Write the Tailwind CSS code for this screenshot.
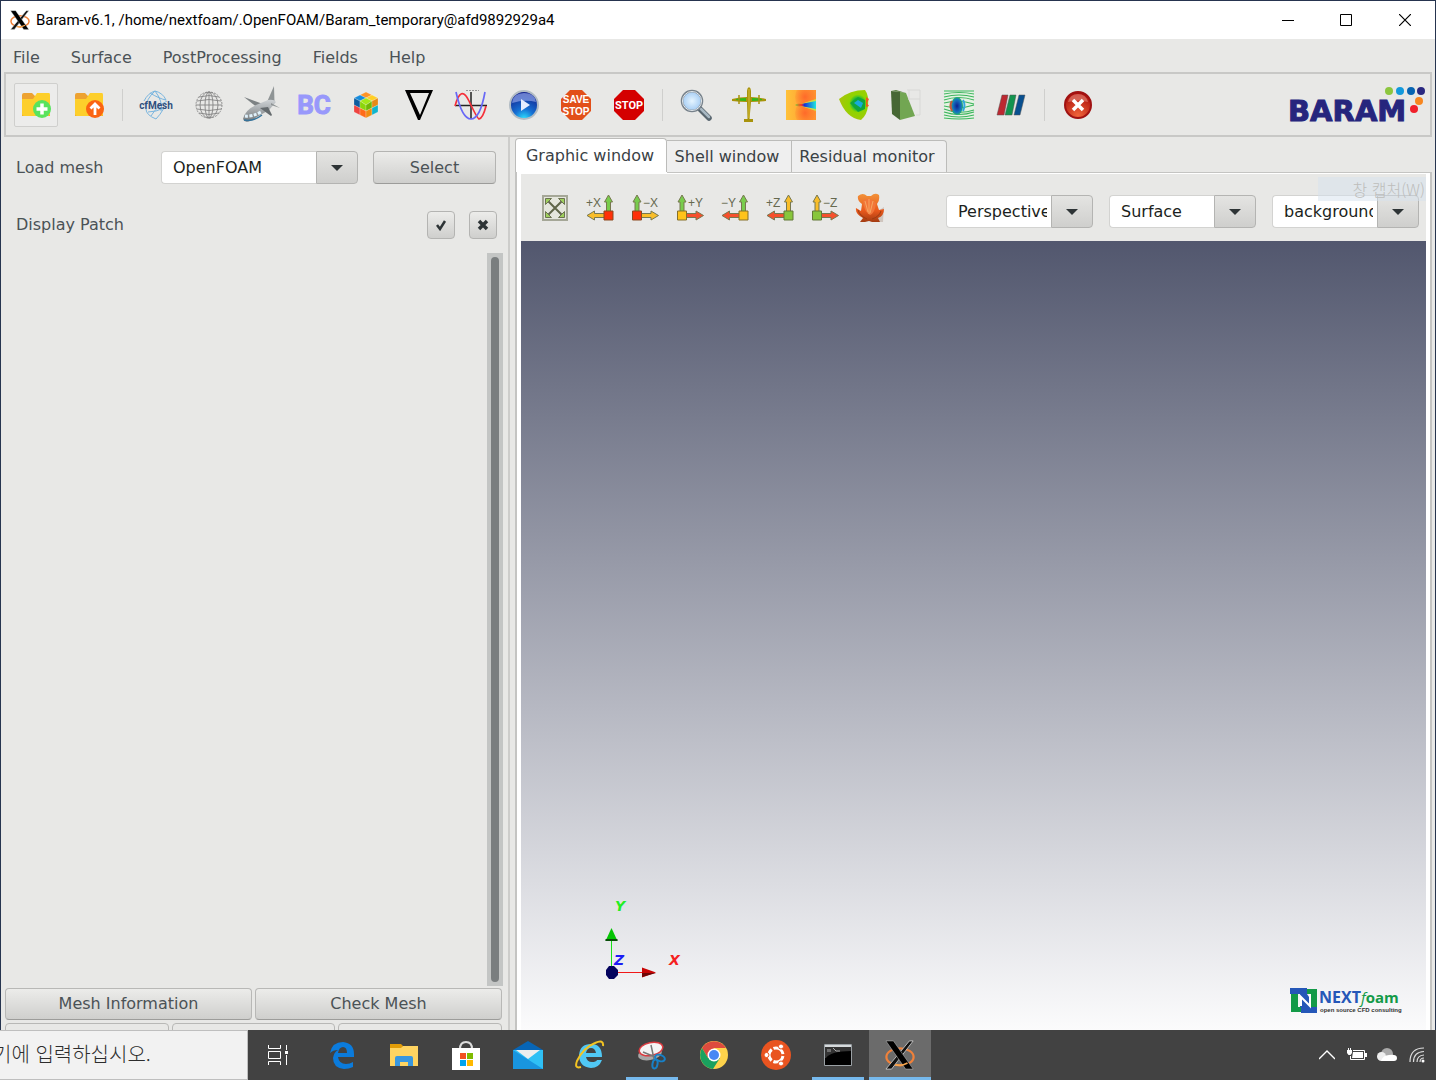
<!DOCTYPE html>
<html lang="en">
<head>
  <meta charset="UTF-8">
  <meta name="viewport" content="width=device-width, initial-scale=1.0">
  <title>Baram-v6.1</title>
  <script src="https://cdn.jsdelivr.net/npm/@tailwindcss/browser@4"></script>
</head>
<body class="h-screen flex flex-col overflow-hidden bg-[#e8e8e6] font-['DejaVu_Sans',sans-serif] text-base text-[#4b5256]">

  <!-- Shared shapes -->
  <svg class="absolute w-0 h-0" aria-hidden="true">
    <defs>
      <symbol id="arrow-up" viewBox="0 0 30 30"><path d="M7 2 11 9H9V19H5V9H3Z" fill="currentColor" stroke="#77784f"/></symbol>
      <symbol id="arrow-right" viewBox="0 0 30 30"><path d="M28.500 22.500 21 27V24.500H11V20.500H21V18Z" fill="currentColor" stroke="#77784f"/></symbol>
      <symbol id="folder" viewBox="0 0 32 32">
        <path d="M2 6q0-2 2-2h8l3 3h14q1 0 1 1v19H2Z" fill="#eda231"/>
        <path d="M2 10h11l4-6h12q1 0 1 2v19q0 2-2 2H4q-2 0-2-2Z" fill="#fdcf2b"/>
      </symbol>
      <symbol id="xlogo" viewBox="0 0 32 32">
        <ellipse cx="16" cy="18" rx="14.500" ry="9" fill="none" stroke="#f0813a" stroke-width="2.400"/>
        <path d="M26 1h4L7 31H1Z" fill="#111" stroke="#ddd" stroke-width=".8"/>
        <path d="M1 1h8l21 30h-8Z" fill="#000" stroke="#ccc" stroke-width=".5"/>
        <path d="M11 26.500q7 1.500 13-2" fill="none" stroke="#f5a54e" stroke-width="1.800"/>
      </symbol>
      <linearGradient id="steel" x1="0" y1="0" x2="0" y2="1"><stop offset="0" stop-color="#cfd3d6"/><stop offset="1" stop-color="#74797c"/></linearGradient>
      <radialGradient id="orb" cx=".5" cy="1" r=".9"><stop offset="0" stop-color="#2fe4ff"/><stop offset=".4" stop-color="#1671d4"/><stop offset="1" stop-color="#12248f"/></radialGradient>
      <radialGradient id="lens"><stop offset="0" stop-color="#e6f5ff"/><stop offset="1" stop-color="#a3cbf3"/></radialGradient>
      <radialGradient id="redball" cx=".5" cy=".9" r=".9"><stop offset="0" stop-color="#f0653a"/><stop offset="1" stop-color="#a90a0a"/></radialGradient>
      <radialGradient id="plume" cx=".5" cy=".5" r=".6"><stop offset="0" stop-color="#ff6a2a"/><stop offset="1" stop-color="#ff6a2a" stop-opacity="0"/></radialGradient>
      <linearGradient id="jet"><stop offset="0" stop-color="#8ed03a"/><stop offset=".3" stop-color="#ff3a20"/><stop offset=".45" stop-color="#1530d8"/><stop offset="1" stop-color="#20e8e0"/></linearGradient>
      <linearGradient id="heat" x1="0" x2="1"><stop offset="0" stop-color="#ffc23a"/><stop offset="1" stop-color="#ff9030"/></linearGradient>
      <radialGradient id="shell" cx=".65" cy=".45" r=".6"><stop offset="0" stop-color="#26b9d8"/><stop offset=".3" stop-color="#18b83a"/><stop offset=".5" stop-color="#8fd400"/><stop offset="1" stop-color="#a6c60a"/></radialGradient>
      <radialGradient id="core" cx=".5" cy=".5" r=".5"><stop offset="0" stop-color="#101f90"/><stop offset=".7" stop-color="#1575c0"/><stop offset="1" stop-color="#22b070"/></radialGradient>
      <linearGradient id="tulip" x1="0" y1="0" x2="0" y2="1"><stop offset="0" stop-color="#f29238"/><stop offset=".6" stop-color="#e8581c"/><stop offset="1" stop-color="#a33c12"/></linearGradient>
    </defs>
  </svg>

  <div class="flex-1 min-h-0 flex flex-col border-t border-x border-[#26344f]">

    <!-- Title bar -->
    <header class="h-[38px] shrink-0 flex items-center bg-white text-black">
      <svg class="w-5 h-5 ml-[9px] mr-[6px]"><use href="#xlogo"/></svg>
      <h1 class="text-[15px] leading-5 font-[Roboto,sans-serif] whitespace-nowrap">Baram-v6.1, /home/nextfoam/.OpenFOAM/Baram_temporary@afd9892929a4</h1>
      <div class="ml-auto flex">
        <button aria-label="Minimize" class="w-[58px] h-9 grid place-items-center"><svg class="w-3 h-3" viewBox="0 0 12 12"><path d="M0 6.500h12" stroke="#000"/></svg></button>
        <button aria-label="Maximize" class="w-[58px] h-9 grid place-items-center"><svg class="w-3 h-3" viewBox="0 0 12 12"><path d="M.5.5h11v11H.5Z" fill="none" stroke="#000"/></svg></button>
        <button aria-label="Close" class="w-[60px] h-9 grid place-items-center"><svg class="w-3 h-3" viewBox="0 0 12 12"><path d="M0 0 12 12M12 0 0 12" stroke="#000" stroke-width="1.200"/></svg></button>
      </div>
    </header>

    <!-- Menu -->
    <nav class="h-[33px] shrink-0 flex items-center gap-[31px] pt-1 pl-3 leading-5">
      <a href="#">File</a>
      <a href="#">Surface</a>
      <a href="#">PostProcessing</a>
      <a href="#">Fields</a>
      <a href="#">Help</a>
    </nav>

    <!-- Main toolbar -->
    <div class="h-[65px] shrink-0 mx-[3px] pl-2 pr-[5px] flex items-center gap-[11px] border-2 border-[#c8c8c6]">
      <div class="flex w-[97px] justify-between">
        <button aria-label="New" class="w-11 h-11 grid place-items-center rounded-xs border border-[#cfcfcd] bg-[#ececeb]">
          <svg class="w-8 h-8" viewBox="0 0 32 32"><use href="#folder"/><circle cx="22" cy="20" r="9" fill="#59e35d"/><path d="M22 14.500v11M16.500 20h11" stroke="#fff" stroke-width="3.500"/></svg>
        </button>
        <button aria-label="Open" class="w-11 h-11 grid place-items-center">
          <svg class="w-8 h-8" viewBox="0 0 32 32"><use href="#folder"/><circle cx="22" cy="20" r="9" fill="#fb6412"/><path d="M22 26V16M17.500 19.500 22 15l4.500 4.500" fill="none" stroke="#fff" stroke-width="2.800"/></svg>
        </button>
      </div>
      <div class="w-px h-8 bg-[#cfcfcd]"></div>
      <div class="flex w-[517px] justify-between">
        <button aria-label="cfMesh" class="w-11 h-11 grid place-items-center">
          <svg class="w-9 h-8" viewBox="0 0 36 32"><g fill="none" stroke="#79b5df"><path d="M6 12q4-8 11-10 8 2 11 9M12 4q10 6 16 7M17 2q-9 8-9 17M17 2q8 10 6 20M8 20q0 6 10 10 4-4 8-11M10 23q8 0 16-4M13 27q6-10 16-15"/></g><text x="18" y="20" text-anchor="middle" font-family="Roboto" font-size="10" font-weight="bold" fill="#30507e">cfMesh</text></svg>
        </button>
        <button aria-label="Mesh" class="w-11 h-11 grid place-items-center">
          <svg class="w-8 h-8" viewBox="0 0 32 32"><g fill="none" stroke="#838383" stroke-width=".9"><circle cx="16" cy="16" r="13" stroke-dasharray="2 1"/><ellipse cx="16" cy="16" rx="9" ry="13"/><ellipse cx="16" cy="16" rx="4" ry="13"/><path d="M16 3v26M3 16h26M4 12q12-3 24 0M6 8q10-3 20 0M4 20q12 3 24 0M6 24q10 3 20 0"/></g></svg>
        </button>
        <button aria-label="Airplane" class="w-11 h-11 grid place-items-center">
          <svg class="w-10 h-10" viewBox="0 0 40 40"><path d="M26 17 33 1l.5 17Z" fill="#8f9495"/><path d="M3 12 22 19l-5 4Z" fill="#7d8284"/><path d="M2 34Q4 25 15 20L27 15q6-1 8 2L28 25 11 35q-7 4-9-1Z" fill="url(#steel)"/><path d="M4 31q7 1 16-4" fill="none" stroke="#dff1fb" stroke-width="3" stroke-dasharray="3 1.500"/><path d="M3 35q9 2 18-5" fill="none" stroke="#35739b" stroke-width="1.500"/><path d="M19 23 30 31l1-1-4-8Z" fill="#656b6e"/><path d="M30 20 39 23l-9-5Z" fill="#8f9495"/></svg>
        </button>
        <button aria-label="Boundary conditions" class="w-11 h-11 grid place-items-center">
          <svg class="w-9 h-8" viewBox="0 0 36 32"><text x="18" y="25" text-anchor="middle" font-family="Roboto" font-size="26" font-weight="bold" fill="#9898fb" stroke="#9898fb">BC</text></svg>
        </button>
        <button aria-label="Materials" class="w-11 h-11 grid place-items-center">
          <svg class="w-8 h-8" viewBox="0 0 32 32"><g stroke="#fff8" stroke-width=".4"><path d="m16 3 6 3-6 3-6-3Z" fill="#ff9326"/><path d="m10 6 6 3-6 3-6-3Z" fill="#168bdc"/><path d="m22 6 6 3-6 3-6-3Z" fill="#ffcf26"/><path d="m16 9 6 3-6 4-6-4Z" fill="#a5e818"/><path d="m4 9 6 3v7l-6-3Z" fill="#0e5d9f"/><path d="m10 12 6 4v6l-6-3Z" fill="#8bd50a"/><path d="m22 12-6 4v6l6-3Z" fill="#72b805"/><path d="m28 9-6 3v7l6-3Z" fill="#e78918"/><path d="m4 16 6 3v7l-6-3Z" fill="#ee4440"/><path d="m10 19 6 3v7l-6-3Z" fill="#ff6b19"/><path d="m22 19-6 3v7l6-3Z" fill="#ef8c10"/><path d="m28 16-6 3v7l6-3Z" fill="#10b5cd"/></g></svg>
        </button>
        <button aria-label="Gradient" class="w-11 h-11 grid place-items-center">
          <svg class="w-8 h-8" viewBox="0 0 32 32"><path fill-rule="evenodd" d="M2 1h28L17 31h-2ZM7 4l10 22 9-22Z" fill="#000"/></svg>
        </button>
        <button aria-label="Functions" class="w-11 h-11 grid place-items-center">
          <svg class="w-9 h-9" viewBox="0 0 36 36" fill="none"><path d="M2 18.500h32M18 5v27" stroke="#222" stroke-width="1.500"/><path d="M13 3.500h13" stroke="#999" stroke-dasharray="2 1"/><path d="M2 19Q8-3 16 14T26 32q4-1 7-13" stroke="#f5303a" stroke-width="1.700"/><path d="M3 5q6 27 15 27T32 5" stroke="#6868f6" stroke-width="1.700"/></svg>
        </button>
        <button aria-label="Run" class="w-11 h-11 grid place-items-center">
          <svg class="w-8 h-8" viewBox="0 0 32 32"><circle cx="16" cy="16" r="14" fill="url(#orb)" stroke="#b2bcc4" stroke-width="2"/><path d="M4 14Q5 4 16 4t12 9q-11-3-24 1Z" fill="#8fa4e8" opacity=".7"/><path d="m13 10 9 6-9 6Z" fill="#e6edff"/></svg>
        </button>
        <button aria-label="Save and stop" class="w-11 h-11 grid place-items-center">
          <svg class="w-9 h-8" viewBox="0 0 36 32"><path d="M12 1h12l9 9v12l-9 9H12l-9-9V10Z" fill="#e24f19"/><g font-family="Liberation Sans" font-size="10" font-weight="bold" fill="#fff" text-anchor="middle"><text x="18" y="14">SAVE</text><text x="18" y="26">STOP</text></g></svg>
        </button>
        <button aria-label="Stop" class="w-11 h-11 grid place-items-center">
          <svg class="w-8 h-8" viewBox="0 0 32 32"><path d="M10 1h12l9 9v12l-9 9H10l-9-9V10Z" fill="#d40000"/><text x="16" y="20" font-family="Roboto" font-size="11" font-weight="bold" fill="#fff" text-anchor="middle">STOP</text></svg>
        </button>
      </div>
      <div class="w-px h-8 bg-[#cfcfcd]"></div>
      <div class="flex w-[359px] justify-between">
        <button aria-label="Search" class="w-11 h-11 grid place-items-center">
          <svg class="w-8 h-8" viewBox="0 0 32 32"><path d="m20 20 9 9" stroke="#59666f" stroke-width="5.500" stroke-linecap="round"/><path d="m21 20 8 8" stroke="#a9b9c3" stroke-width="2.500" stroke-linecap="round"/><circle cx="12" cy="12" r="10" fill="url(#lens)" stroke="#77828b" stroke-width="2.500"/><circle cx="12" cy="12" r="9.500" fill="none" stroke="#e4e9ed"/></svg>
        </button>
        <button aria-label="Surface result" class="w-11 h-11 grid place-items-center">
          <svg class="w-9 h-9" viewBox="0 0 36 36"><path d="M1 12q8-2 15-2V4q0-3 2-4 2 1 2 4v6q7 0 15 2v2q-8 1-15 1l-1.500 17h3.500v3h-9v-3h3.500L16 15q-7 0-15-1Z" fill="#a8930c"/><path d="M5 12q5-1 10-1v3q-6 0-10-1M31 12q-5-1-10-1v3q6 0 10-1" fill="#34b71a"/><path d="M8 8v9M28 8v9" stroke="#a8930c" stroke-width="1.500"/><path d="M18 2v29" stroke="#d6bd37"/></svg>
        </button>
        <button aria-label="Cut plane" class="w-11 h-11 grid place-items-center">
          <svg class="w-[30px] h-[30px]" viewBox="0 0 30 30"><path d="M0 0h30v30H0Z" fill="url(#heat)"/><ellipse cx="19" cy="7" rx="10" ry="12" fill="url(#plume)"/><ellipse cx="19" cy="23" rx="10" ry="12" fill="url(#plume)"/><path d="M12 15 30 9v12Z" fill="#cde044"/><path d="M9 15q2-2 6-1l15-3v8l-15-3q-4 1-6-1Z" fill="url(#jet)"/></svg>
        </button>
        <button aria-label="Iso surface" class="w-11 h-11 grid place-items-center">
          <svg class="w-8 h-8" viewBox="0 0 32 32"><path d="M1 10Q12 1 27 1q4 5 3 16-1 9-7 14Q8 29 1 10Z" fill="url(#shell)"/><path d="m12 14 8-6 7 3v9l-7 3Z" fill="#11a53d"/><path d="m16 14 4-3 5 3-2 5Z" fill="#18a9dd"/><path d="m28 8 3 2-2 4 2 3-3 1Z" fill="#f05b20"/></svg>
        </button>
        <button aria-label="Clip" class="w-11 h-11 grid place-items-center">
          <svg class="w-8 h-8" viewBox="0 0 32 32"><path d="m1 2 9 1v28L2 25Z" fill="#466734"/><path d="m10 3 6 1 9 23-15 4Z" fill="#72a652"/><path d="m1 2 5-1 10 3-6-1Z" fill="#587f40"/><path d="M17 1h13v25h-4M19 1v10M19 10h11" fill="none" stroke="#d8d8d6"/></svg>
        </button>
        <button aria-label="Streamlines" class="w-11 h-11 grid place-items-center">
          <svg class="w-8 h-8" viewBox="0 0 32 32"><path d="M1 1h30v30H1Z" fill="#e4f2e2"/><g fill="none" stroke="#3bb45c" stroke-width="1.100"><path d="M1 2h30M1 5q15-3 30 0M1 8q15-4 30 0M1 11q15-5 30 0M1 14q15-4 30 1M1 17q15 4 30-1M1 20q15 6 30 1M1 23q15 5 30 0M1 26q15 4 30 0M1 29q15 2 30 0"/></g><ellipse cx="14" cy="17" rx="6" ry="9" fill="url(#core)"/><path d="M9 12q-3 4 0 10" stroke="#c5583a" stroke-width="2" fill="none"/><path d="M20 11q3 5 0 11" stroke="#2fa8dd" stroke-width="2" fill="none"/></svg>
        </button>
        <button aria-label="ParaView" class="w-11 h-11 grid place-items-center">
          <svg class="w-8 h-8" viewBox="0 0 32 32" stroke="#555" stroke-width=".5"><path d="M7 6h6L9 26H2Z" fill="#bc2831"/><path d="M15 6h6l-4 20h-7Z" fill="#12934e"/><path d="M24 6h6l-5 20h-6Z" fill="#084f8f"/></svg>
        </button>
      </div>
      <div class="w-px h-8 bg-[#cfcfcd]"></div>
      <button aria-label="Quit" class="w-11 h-11 grid place-items-center">
        <svg class="w-8 h-8" viewBox="0 0 32 32"><circle cx="16" cy="16" r="13" fill="url(#redball)" stroke="#a01212" stroke-width="2"/><path d="M6 13Q8 5 16 5t10 8q-9-3-20 0Z" fill="#f0a090" opacity=".5"/><path d="m11 11 10 10M21 11 11 21" stroke="#fff" stroke-width="3.500"/></svg>
      </button>
      <svg class="ml-auto w-[137px] h-9" viewBox="0 0 137 36">
        <text x="0" y="34" font-family="DejaVu Sans" font-size="29" font-weight="bold" fill="#26257d" stroke="#26257d">BARAM</text>
        <circle cx="101" cy="4" r="4" fill="#8cc63f"/><circle cx="112" cy="4" r="4" fill="#1299dc"/><circle cx="123" cy="4" r="4" fill="#0764b2"/><circle cx="133" cy="4" r="4" fill="#2a2880"/>
        <circle cx="131" cy="14" r="4" fill="#f7861f"/><circle cx="126" cy="22" r="4" fill="#f0202a"/>
      </svg>
    </div>

    <div class="flex-1 min-h-0 flex">

      <!-- Left panel -->
      <section class="w-[509px] shrink-0 flex flex-col border-r-2 border-[#cdcdcb]">
        <div class="flex items-center pt-[14px] pl-[15px] pr-[11px]">
          <label for="mesh-format" class="w-[145px]">Load mesh</label>
          <div class="flex h-[33px] w-[197px]">
            <select id="mesh-format" class="appearance-none flex-1 min-w-0 pl-[11px] bg-white text-[#1c1f20] rounded-l border border-r-0 border-[#d3d3d1]"><option>OpenFOAM</option></select>
            <span class="w-[42px] grid place-items-center rounded-r border border-[#b4b4b2] bg-linear-to-b from-[#e4e4e2] to-[#cfcfcd]"><svg class="w-3 h-2" viewBox="0 0 12 8"><path d="M0 1h12L6 7Z" fill="#2e3436"/></svg></span>
          </div>
          <button class="ml-[15px] h-[33px] w-[123px] rounded border border-[#b4b4b2] border-b-[#9c9c9a] bg-linear-to-b from-[#ececea] to-[#cfcfcd]">Select</button>
        </div>
        <div class="flex items-center pt-[27px] pl-[15px] pr-[11px]">
          <span class="mr-auto">Display Patch</span>
          <button aria-label="Select all" class="w-7 h-7 mr-[14px] grid place-items-center rounded border border-[#b4b4b2] bg-linear-to-b from-[#ececea] to-[#cfcfcd]"><svg class="w-3 h-3" viewBox="0 0 12 12"><path d="m2 6 3 4 5-8" fill="none" stroke="#2e3436" stroke-width="2.500"/></svg></button>
          <button aria-label="Deselect all" class="w-7 h-7 grid place-items-center rounded border border-[#b4b4b2] bg-linear-to-b from-[#ececea] to-[#cfcfcd]"><svg class="w-3 h-3" viewBox="0 0 12 12"><path d="m2 2 8 8M10 2 2 10" stroke="#2e3436" stroke-width="3.500"/></svg></button>
        </div>
        <div class="flex-1 min-h-0 mt-[14px] mr-[5px] flex justify-end">
          <div class="w-4 flex justify-center py-1 bg-[#c3c5c4]"><div class="w-2 rounded-full bg-[#7a7e7f]"></div></div>
        </div>
        <div class="flex gap-[3px] pt-0.5 pl-1 pr-[6px]">
          <button class="flex-1 h-8 rounded border border-[#b8b8b6] border-b-[#9c9c9a] bg-linear-to-b from-[#ececea] to-[#cfcfcd]">Mesh Information</button>
          <button class="flex-1 h-8 rounded border border-[#b8b8b6] border-b-[#9c9c9a] bg-linear-to-b from-[#ececea] to-[#cfcfcd]">Check Mesh</button>
        </div>
        <div class="h-[10px] overflow-hidden flex gap-[3px] pt-[3px] pl-1 pr-[6px]">
          <button aria-label="Action 1" class="flex-1 h-8 rounded border border-[#b8b8b6] bg-[#e8e8e6]"></button>
          <button aria-label="Action 2" class="flex-1 h-8 rounded border border-[#b8b8b6] bg-[#e8e8e6]"></button>
          <button aria-label="Action 3" class="flex-1 h-8 rounded border border-[#b8b8b6] bg-[#e8e8e6]"></button>
        </div>
      </section>

      <!-- Notebook -->
      <section class="flex-1 min-w-0 flex flex-col ml-[5px] mr-[3px]">
        <div class="relative flex items-end h-[35px] shrink-0 text-[#3a4145]">
          <button class="relative z-10 h-[34px] w-[152px] pr-0.5 rounded-t border border-b-0 border-[#bcbcba] bg-white">Graphic window</button>
          <button class="h-8 w-[125px] pr-1 bg-[#efefef] border-t border-r border-[#bcbcba]">Shell window</button>
          <button class="h-8 w-[155px] pr-1 bg-[#efefef] border-t border-r rounded-tr border-[#bcbcba]">Residual monitor</button>
        </div>
        <div class="relative flex-1 min-h-0 flex flex-col bg-white border-x-2 border-[#c4c4c2] px-1">
          <div class="-mx-1 h-0.5 shrink-0 flex"><span class="w-[150px]"></span><span class="flex-1 h-px bg-[#c4c4c2]"></span></div>
          <div class="h-[67px] shrink-0 flex items-center bg-[#e8e8e6] pl-[11px] pr-[7px]">
            <button aria-label="Fit" class="w-[45px] grid place-items-center">
              <svg class="w-7 h-7" viewBox="0 0 28 28"><path d="M2 2h24v24H2Z" fill="#e5e6dd" stroke="#a5a797" stroke-width="2"/><path d="m5 5 18 18M23 5 5 23" stroke="#5f6549" stroke-width="2"/><path d="M4.500 4.500h6l-6 6ZM23.500 4.500h-6l6 6ZM4.500 23.500h6l-6-6ZM23.500 23.500h-6l6-6Z" fill="#9fd05e" stroke="#6b7251"/></svg>
            </button>
            <button aria-label="+X" class="w-[45px] grid place-items-center">
              <svg class="w-[30px] h-[30px]" viewBox="0 0 30 30"><g transform="matrix(-1 0 0 1 30.500 0)"><use href="#arrow-up" class="text-[#78cc4d]"/><use href="#arrow-right" class="text-[#f8bd29]"/></g><path d="M19 18h9v9h-9Z" fill="#ff3008" stroke="#8b4a20"/><text x="1" y="14" font-family="Liberation Sans" font-size="12" fill="#66694f">+X</text></svg>
            </button>
            <button aria-label="-X" class="w-[45px] grid place-items-center">
              <svg class="w-[30px] h-[30px]" viewBox="0 0 30 30"><use href="#arrow-up" class="text-[#78cc4d]"/><use href="#arrow-right" class="text-[#f8bd29]"/><path d="M2.500 18h9v9h-9Z" fill="#ff3008" stroke="#8b4a20"/><text x="13" y="14" font-family="Liberation Sans" font-size="12" fill="#66694f">−X</text></svg>
            </button>
            <button aria-label="+Y" class="w-[45px] grid place-items-center">
              <svg class="w-[30px] h-[30px]" viewBox="0 0 30 30"><use href="#arrow-up" class="text-[#78cc4d]"/><use href="#arrow-right" class="text-[#f5502c]"/><path d="M2.500 18h9v9h-9Z" fill="#ffc31a" stroke="#85702a"/><text x="13" y="14" font-family="Liberation Sans" font-size="12" fill="#66694f">+Y</text></svg>
            </button>
            <button aria-label="-Y" class="w-[45px] grid place-items-center">
              <svg class="w-[30px] h-[30px]" viewBox="0 0 30 30"><g transform="matrix(-1 0 0 1 30.500 0)"><use href="#arrow-up" class="text-[#78cc4d]"/><use href="#arrow-right" class="text-[#f5502c]"/></g><path d="M19 18h9v9h-9Z" fill="#ffc31a" stroke="#85702a"/><text x="1" y="14" font-family="Liberation Sans" font-size="12" fill="#66694f">−Y</text></svg>
            </button>
            <button aria-label="+Z" class="w-[45px] grid place-items-center">
              <svg class="w-[30px] h-[30px]" viewBox="0 0 30 30"><g transform="matrix(-1 0 0 1 30.500 0)"><use href="#arrow-up" class="text-[#f8bd29]"/><use href="#arrow-right" class="text-[#f5502c]"/></g><path d="M19 18h9v9h-9Z" fill="#88c63c" stroke="#637838"/><text x="1" y="14" font-family="Liberation Sans" font-size="12" fill="#66694f">+Z</text></svg>
            </button>
            <button aria-label="-Z" class="w-[45px] grid place-items-center">
              <svg class="w-[30px] h-[30px]" viewBox="0 0 30 30"><use href="#arrow-up" class="text-[#f8bd29]"/><use href="#arrow-right" class="text-[#f5502c]"/><path d="M2.500 18h9v9h-9Z" fill="#88c63c" stroke="#637838"/><text x="13" y="14" font-family="Liberation Sans" font-size="12" fill="#66694f">−Z</text></svg>
            </button>
            <button aria-label="Background picture" class="w-[45px] grid place-items-center">
              <svg class="w-[30px] h-[30px]" viewBox="0 0 30 30"><path d="M20 20 29 14l-1 15h-9Z" fill="#cfc5be"/><path d="M3 3Q8-1 12 3h4q4-4 8-1 1 6-2 9l2 6 5-1q0 7-6 9l2 4h-8l-3-1-4 1H5l3-4Q0 21 1 15l5 3 1-7Q2 8 3 3Z" fill="url(#tulip)"/><path d="M8 8q6-5 13 2-1 10-6 12-6-3-7-14Z" fill="#f2763a"/><path d="M14 6v15M10 8l3 11M18 8l-3 12" stroke="#f8b26b" stroke-width=".8"/><path d="M3 17q2 6 9 9M26 18q-2 6-9 8" fill="none" stroke="#9d3b12"/></svg>
            </button>
            <div class="ml-auto flex gap-4 pt-2">
              <div class="flex h-[33px] w-[147px]">
                <select aria-label="Projection" class="appearance-none flex-1 min-w-0 pl-[11px] pr-1 bg-white text-[#1c1f20] rounded-l border border-r-0 border-[#d3d3d1]"><option>Perspective</option></select>
                <span class="w-[42px] grid place-items-center rounded-r border border-[#b4b4b2] bg-linear-to-b from-[#e4e4e2] to-[#cfcfcd]"><svg class="w-3 h-2" viewBox="0 0 12 8"><path d="M0 1h12L6 7Z" fill="#2e3436"/></svg></span>
              </div>
              <div class="flex h-[33px] w-[147px]">
                <select aria-label="Representation" class="appearance-none flex-1 min-w-0 pl-[11px] pr-1 bg-white text-[#1c1f20] rounded-l border border-r-0 border-[#d3d3d1]"><option>Surface</option></select>
                <span class="w-[42px] grid place-items-center rounded-r border border-[#b4b4b2] bg-linear-to-b from-[#e4e4e2] to-[#cfcfcd]"><svg class="w-3 h-2" viewBox="0 0 12 8"><path d="M0 1h12L6 7Z" fill="#2e3436"/></svg></span>
              </div>
              <div class="flex h-[33px] w-[147px]">
                <select aria-label="Background" class="appearance-none flex-1 min-w-0 pl-[11px] pr-1 bg-white text-[#1c1f20] rounded-l border border-r-0 border-[#d3d3d1]"><option>background</option></select>
                <span class="w-[42px] grid place-items-center rounded-r border border-[#b4b4b2] bg-linear-to-b from-[#e4e4e2] to-[#cfcfcd]"><svg class="w-3 h-2" viewBox="0 0 12 8"><path d="M0 1h12L6 7Z" fill="#2e3436"/></svg></span>
              </div>
            </div>
          </div>

          <!-- 3D view -->
          <div class="relative flex-1 min-h-0 bg-[linear-gradient(to_bottom,#52576e,#fbfbfc)]">
            <svg class="absolute left-[79px] bottom-10 w-[95px] h-[95px]" viewBox="0 0 95 95" font-family="DejaVu Sans" font-size="14" font-weight="bold" font-style="italic">
              <path d="M11.500 77V44" stroke="#18e018"/><path d="m11.500 33 6 13h-12Z" fill="#04c404"/><path d="M5.500 44h12v2h-12Z" fill="#0a4d0a"/>
              <path d="M12 77.500h32" stroke="#f01818"/><path d="m56 77.500-14-5v10Z" fill="#c80404"/><path d="M42 78h14l-14 4Z" fill="#6d0606"/>
              <path d="M9 71h5l4 4v5l-4 4H9l-3-4v-5Z" fill="#04045e"/>
              <text x="15" y="16" fill="#22ee22">Y</text><text x="14" y="70" fill="#1c1cf5">Z</text><text x="69" y="70" fill="#f52020">X</text>
            </svg>
            <svg class="absolute right-[24px] bottom-[14px] w-[112px] h-[30px]" viewBox="0 0 112 30">
              <path d="M1 7h7v14h7v5H1ZM13 3h14v18h-6V8h-8Z" fill="#139a48"/><path d="M0 2h17v6l4 6v7h6v6H11v-6h-1V8H0Z" fill="#2557b8"/><path d="M11 20v-9l9 9V8" fill="none" stroke="#fff" stroke-width="2"/>
              <text x="29" y="17" font-family="Open Sans" font-size="16" font-weight="bold" fill="#2557b8">NEXT</text>
              <text x="71" y="17" font-family="Open Sans" font-size="15" font-weight="bold" fill="#139a48"><tspan font-style="italic" font-weight="normal">f</tspan>oam</text>
              <text x="30" y="26" font-family="Liberation Sans" font-size="6" font-weight="bold" fill="#333">open source CFD consulting</text>
            </svg>
          </div>

          <div class="absolute right-1 top-[5px] w-[108px] h-6 pr-px bg-[#d5e2ee]/50 text-right text-base leading-6 text-[#bdbdbb] font-['Noto_Sans_CJK_KR',sans-serif] font-light whitespace-nowrap pointer-events-none" lang="ko">창 캡처(W)</div>
        </div>
      </section>
    </div>
  </div>

  <!-- Taskbar -->
  <footer class="h-[50px] shrink-0 flex bg-[#424242]">
    <input type="text" aria-label="Search" lang="ko" placeholder="기에 입력하십시오." class="w-[248px] h-full pb-1 -indent-[7px] bg-[#f2f2f2] border-y border-r border-[#bfbfbf] text-xl placeholder:text-[#2d2d2d] font-['Noto_Sans_CJK_KR',sans-serif] font-light">
    <button aria-label="Task view" class="w-[60px] mr-[3px] grid place-items-center"><svg class="w-5 h-5" viewBox="0 0 20 20" fill="none" stroke="#fff"><path d="M.5 0v3.500h12V0M.5 6.500h12v7H.5ZM.5 20v-3.500h12V20M18.500 0v5M18.500 10v10"/><path d="M17 6h3v3h-3Z" fill="#fff" stroke="none"/></svg></button>
    <button aria-label="Edge" class="w-[62px] grid place-items-center"><svg class="w-[26px] h-[28px]" viewBox="0 0 26 28"><path d="M1 12Q3 1 14 1q11 1 11 12v3H9q1 7 8 7 4 0 7-2v5q-4 2-9 2Q4 27 4 17q1-6 5-8-5 0-8 3Zm8 0h9q0-6-4-6t-5 6Z" fill="#0b7bdc" fill-rule="evenodd"/></svg></button>
    <button aria-label="File Explorer" class="w-[62px] grid place-items-center"><svg class="w-7 h-6" viewBox="0 0 28 24"><path d="M0 1h11l2 2-2 4H0Z" fill="#e29c07"/><path d="M0 5h11l2-2h15v20H0Z" fill="#ffd461"/><path d="M5 23V15q0-2 2-2h14q2 0 2 2v8h-5v-4h-8v4Z" fill="#3997df"/></svg></button>
    <button aria-label="Store" class="w-[62px] grid place-items-center"><svg class="w-[30px] h-[30px]" viewBox="0 0 30 30"><path d="M9 9q0-7 6-7t6 7" fill="none" stroke="#ddd" stroke-width="2"/><path d="M1 8h28v22H1Z" fill="#fff"/><path d="M9 13h6v6H9Z" fill="#f25022"/><path d="M16 13h6v6h-6Z" fill="#7fba00"/><path d="M9 20h6v6H9Z" fill="#00a4ef"/><path d="M16 20h6v6h-6Z" fill="#ffb900"/></svg></button>
    <button aria-label="Mail" class="w-[62px] grid place-items-center"><svg class="w-[30px] h-7" viewBox="0 0 30 28"><path d="M0 9 15 0l15 9Z" fill="#0765b6"/><path d="M0 9h30v19H0Z" fill="#2fc0f5"/><path d="m0 9 30 19H0Z" fill="#1995df"/><path d="M3 9h24L15 18Z" fill="#eee"/></svg></button>
    <button aria-label="Internet Explorer" class="w-[62px] grid place-items-center"><svg class="w-[30px] h-[30px]" viewBox="0 0 30 30"><path d="M4 15Q5 4 16 4t11 13H11q1 5 6 5 4 0 5-2h5q-3 8-11 8Q4 27 4 15Zm7-2h10q-1-5-5-5t-5 5Z" fill="#50c8f4" fill-rule="evenodd"/><path d="M6 27q-7 2-4-6Q8 8 20 3q9-4 8 3" fill="none" stroke="#f3c423" stroke-width="2"/></svg></button>
    <button aria-label="Snipping Tool" class="w-[62px] relative grid place-items-center"><svg class="w-7 h-[30px]" viewBox="0 0 28 30"><ellipse cx="12" cy="14" rx="12" ry="6" fill="#a7a7a7" transform="rotate(-12 12 14)"/><ellipse cx="13" cy="9" rx="12" ry="6.500" fill="#f4f4f4" stroke="#db3b40" stroke-width="1.500" transform="rotate(-12 13 9)"/><path d="m13 5 3 14M5 12l12 5" stroke="#777" stroke-width="1.500"/><g fill="none" stroke="#1780c7" stroke-width="2"><ellipse cx="22" cy="18" rx="5" ry="3" transform="rotate(20 22 18)"/><ellipse cx="17" cy="24" rx="2.500" ry="4.500" transform="rotate(10 17 24)"/></g></svg><span class="absolute bottom-0 inset-x-[5px] h-[3px] bg-[#76b9ed]"></span></button>
    <button aria-label="Chrome" class="w-[62px] grid place-items-center"><svg class="w-7 h-7" viewBox="0 0 28 28"><circle cx="14" cy="14" r="14" fill="#fdd24b"/><path d="M2 7a14 14 0 0 1 24 0H14L8 17Z" fill="#dd4b3e"/><path d="M2 7a14 14 0 0 0 11 21l7-11H8Z" fill="#1aa15f"/><circle cx="14" cy="14" r="6.500" fill="#fff"/><circle cx="14" cy="14" r="5" fill="#4688f4"/></svg></button>
    <button aria-label="Ubuntu" class="w-[62px] grid place-items-center"><svg class="w-[30px] h-[30px]" viewBox="0 0 30 30"><circle cx="15" cy="15" r="15" fill="#e95420"/><circle cx="15" cy="15" r="7" fill="none" stroke="#fff" stroke-width="3" stroke-dasharray="12.600 2" stroke-dashoffset="-1"/><g fill="#fff" stroke="#e95420"><circle cx="5.500" cy="15" r="2.500"/><circle cx="20" cy="6.500" r="2.500"/><circle cx="20" cy="23.500" r="2.500"/></g></svg></button>
    <button aria-label="Terminal" class="w-[62px] relative grid place-items-center"><svg class="w-7 h-6" viewBox="0 0 28 24"><path d="M.5 1.500h27v21H.5Z" fill="#000" stroke="#9aa0a4"/><path d="M1 2h26v2H1Z" fill="#d6dadc"/><path d="M1 4h26v4Q7 8 2 15H1Z" fill="#333"/><path d="M4 6v3M6 6v3M9 5l3 3h4" fill="none" stroke="#ccc" stroke-width=".8"/></svg><span class="absolute bottom-0 inset-x-[5px] h-[3px] bg-[#76b9ed]"></span></button>
    <button aria-label="X server" class="w-[62px] relative grid place-items-center bg-[#6b6b6b]"><svg class="w-[30px] h-[30px]"><use href="#xlogo"/></svg><span class="absolute bottom-0 inset-x-0 h-[3px] bg-[#76b9ed]"></span></button>
    <div class="ml-auto pr-1 flex">
      <button aria-label="Show hidden icons" class="w-[30px] grid place-items-center"><svg class="w-4 h-4" viewBox="0 0 16 16"><path d="m0 12 8-8 8 8" fill="none" stroke="#fff" stroke-width="1.300"/></svg></button>
      <button aria-label="Battery" class="w-[30px] grid place-items-center"><svg class="w-5 h-4" viewBox="0 0 20 16"><path d="M6 3.500h11.500v9H3.500V9" fill="none" stroke="#fff"/><path d="M6 5h10v6H5ZM18 6h2v4h-2ZM0 3h5v3L3.500 8h-2L0 6ZM1 1h1v2H1ZM3 1h1v2H3Z" fill="#fff"/></svg></button>
      <button aria-label="OneDrive" class="w-[30px] grid place-items-center"><svg class="w-5 h-4" viewBox="0 0 20 16"><circle cx="10" cy="7" r="6" fill="#aaa"/><circle cx="4.500" cy="9.500" r="4.500" fill="#eee"/><path d="M4 14q2-6 8-6 8-1 8 3 0 3-3 3Z" fill="#fff"/></svg></button>
      <button aria-label="Network" class="w-[30px] grid place-items-center"><svg class="w-4 h-4" viewBox="0 0 16 16" fill="none" stroke="#ddd" stroke-width="1.200"><path d="M1 15Q1 1 15 1M4.500 15Q4.500 5 15 4.500M8 15q0-6.500 7-7M11 15q0-4 4-4"/><circle cx="14" cy="14" r="1.500" fill="#fff" stroke="none"/></svg></button>
    </div>
  </footer>

</body>
</html>
